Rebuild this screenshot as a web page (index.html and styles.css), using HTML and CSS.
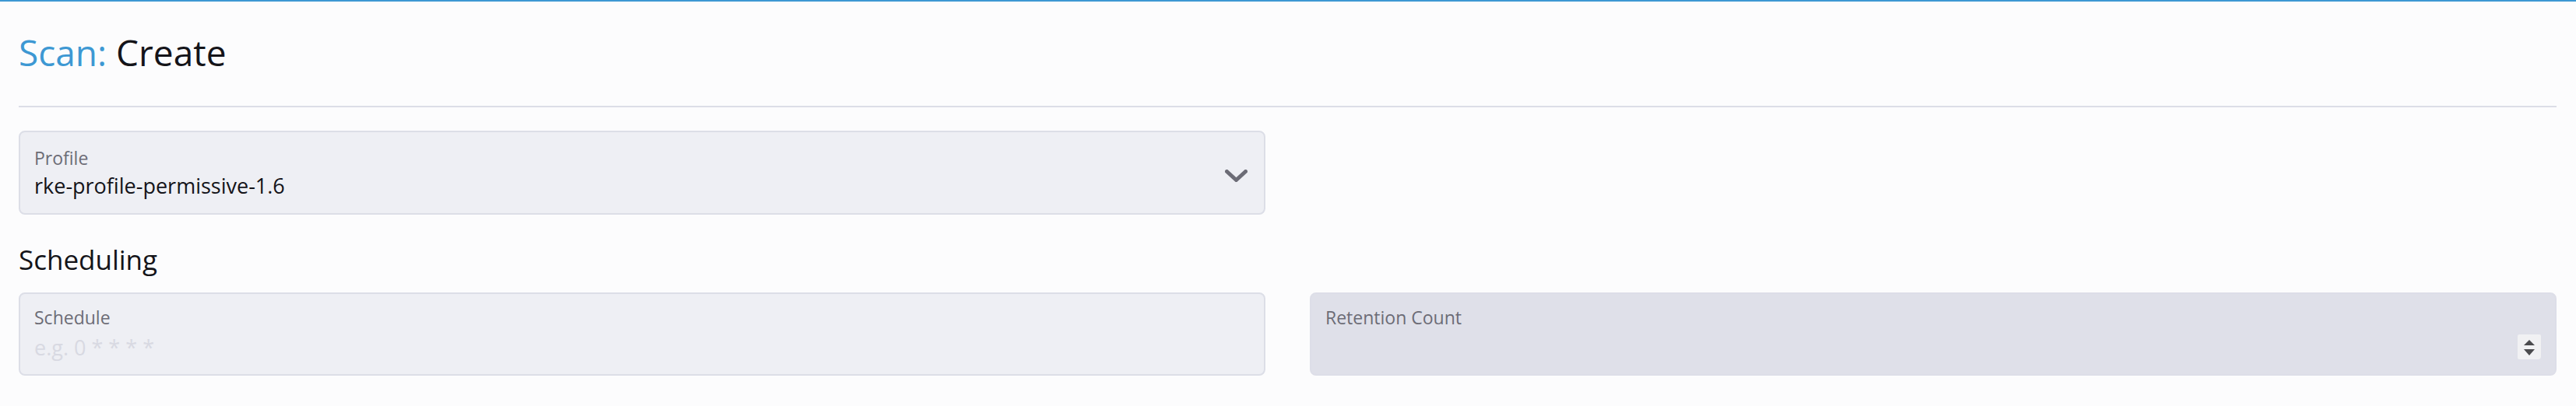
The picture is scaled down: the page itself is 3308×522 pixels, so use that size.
FILE: index.html
```html
<!DOCTYPE html>
<html lang="en">
<head>
<meta charset="utf-8">
<title>Scan: Create</title>
<link rel="stylesheet" href="styles.css">
</head>
<body>
<main class="page">
  <header class="title-bar">
    <h1 class="title"><span class="crumb">Scan:</span> Create</h1>
  </header>
  <div class="divider"></div>

  <div class="row row-profile">
    <div class="field field-select">
      <div class="field-body">
        <div class="field-label">Profile</div>
        <div class="field-value">rke-profile-permissive-1.6</div>
      </div>
      <svg class="chevron" width="29" height="16" viewBox="0 0 29 16" aria-hidden="true">
        <path d="M2.5 2.5 L14.5 13.5 L26.5 2.5" fill="none" stroke="#6c6c76" stroke-width="5" stroke-linecap="round" stroke-linejoin="round"/>
      </svg>
    </div>
  </div>

  <h3 class="section-title">Scheduling</h3>

  <div class="row">
    <div class="field field-input">
      <div class="field-label">Schedule</div>
      <div class="field-placeholder">e.g. 0 * * * *</div>
    </div>
    <div class="field field-input field-disabled">
      <div class="field-label">Retention Count</div>
      <div class="input-line">
        <div class="spinner">
          <span class="tri tri-up"></span>
          <span class="tri tri-down"></span>
        </div>
      </div>
    </div>
  </div>
</main>
</body>
</html>
```

FILE: styles.css
```css
* {
  box-sizing: border-box;
}

html, body {
  margin: 0;
  padding: 0;
}

body {
  background: #fcfcfd;
  border-top: 2px solid #3d98d3;
  font-family: "Open Sans", "Noto Sans", "Liberation Sans", sans-serif;
  color: #141419;
  height: 522px;
  overflow: hidden;
}

.page {
  padding: 0 25px 0 24px;
}

.title-bar {
  padding-top: 36px;
}

.title {
  margin: 0;
  font-size: 46px;
  line-height: 58px;
  font-weight: 400;
  color: #141419;
}

.crumb {
  color: #3d98d3;
}

.divider {
  margin-top: 40px;
  height: 2px;
  background: #dcdee7;
}

.row {
  display: grid;
  grid-template-columns: 1fr 1fr;
  column-gap: 57px;
}

.row-profile {
  margin-top: 30px;
}

.field {
  border: 2px solid #dcdee7;
  border-radius: 8px;
  background: #eeeff4;
}

.field-select {
  height: 108px;
  display: flex;
  align-items: center;
  justify-content: space-between;
  padding: 0 21px 0 18px;
}

.field-body {
  align-self: flex-start;
  padding-top: 19px;
}

.field-label {
  font-size: 23px;
  line-height: 28px;
  color: #6c6c76;
}

.field-value {
  margin-top: 6px;
  font-size: 27px;
  line-height: 32px;
  color: #141419;
}

.chevron {
  display: block;
  margin-top: 8px;
}

.section-title {
  margin: 36px 0 20px;
  font-size: 35px;
  line-height: 44px;
  font-weight: 400;
  color: #141419;
}

.field-input {
  height: 107px;
  padding: 16px 18px 0 18px;
}

.field-placeholder {
  margin-top: 9px;
  font-size: 27px;
  line-height: 32px;
  color: #d8d9e2;
}

.field-disabled {
  background: #dfe0e9;
  border-color: #dddee8;
}

.input-line {
  margin-top: 8px;
  display: flex;
  justify-content: flex-end;
}

.spinner {
  width: 30px;
  height: 32px;
  background: #f1f1f3;
  border-radius: 2px 2px 4px 2px;
  display: flex;
  flex-direction: column;
  align-items: center;
  padding-top: 7px;
  gap: 5px;
}

.tri {
  display: block;
  width: 0;
  height: 0;
  border-left: 7px solid transparent;
  border-right: 7px solid transparent;
}

.tri-up {
  border-bottom: 7px solid #4b4b4e;
}

.tri-down {
  border-top: 8px solid #4b4b4e;
}
```
